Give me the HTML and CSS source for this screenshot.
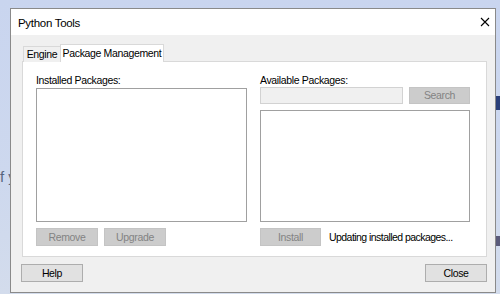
FILE: index.html
```html
<!DOCTYPE html>
<html>
<head>
<meta charset="utf-8">
<link rel="stylesheet" href="styles.css">
</head>
<body>
<div class="desktop">
  <span class="desk-text">f y</span>
  <span class="desk-mark m1"></span>
  <span class="desk-mark m2"></span>
  <div class="window">
    <div class="titlebar">
      <span class="title">Python Tools</span>
      <svg class="close" width="10" height="10" viewBox="0 0 10 10"><path d="M1 1 L9 9 M9 1 L1 9" stroke="#000" stroke-width="1.1" fill="none"/></svg>
    </div>
    <div class="body">
      <div class="tabs">
        <div class="tab">Engine</div>
        <div class="tab active">Package Management</div>
      </div>
      <div class="panel">
        <div class="col left">
          <div class="label">Installed Packages:</div>
          <div class="listbox tall"></div>
          <div class="btnrow">
            <div class="btn disabled">Remove</div>
            <div class="btn disabled">Upgrade</div>
          </div>
        </div>
        <div class="col right">
          <div class="label">Available Packages:</div>
          <div class="searchrow">
            <div class="textbox"></div>
            <div class="btn disabled search">Search</div>
          </div>
          <div class="listbox short"></div>
          <div class="btnrow">
            <div class="btn disabled install">Install</div>
            <span class="status">Updating installed packages...</span>
          </div>
        </div>
      </div>
      <div class="footer">
        <div class="btn normal">Help</div>
        <div class="btn normal">Close</div>
      </div>
    </div>
  </div>
</div>
</body>
</html>
```
FILE: styles.css
```css
* { box-sizing: border-box; }
html, body { margin: 0; padding: 0; }
body {
  width: 500px;
  height: 294px;
  overflow: hidden;
  font-family: "Liberation Sans", Arial, sans-serif;
  font-size: 10.5px;
  letter-spacing: -0.35px;
  color: #000;
}
.desktop {
  position: relative;
  width: 500px;
  height: 294px;
  overflow: hidden;
  background: linear-gradient(180deg, #c9d5ef 0%, #cdd8ee 60%, #d3dcec 100%);
  padding: 8px 0 0 10px;
}
.desk-text {
  position: absolute;
  left: 0;
  top: 168px;
  font-size: 15px;
  letter-spacing: 0;
  color: #55657f;
}
.desk-mark {
  position: absolute;
  left: 496px;
  width: 4px;
  background: #2a3f7a;
}
.m1 { top: 96px; height: 14px; }
.m2 { top: 236px; height: 10px; background: #5a5a7a; }
.window {
  position: relative;
  width: 486px;
  height: 285px;
  border: 1px solid #8a8a8a;
  background: #f0f0f0;
  display: flex;
  flex-direction: column;
}
.titlebar {
  height: 26px;
  background: #fff;
  display: flex;
  align-items: center;
  justify-content: space-between;
  padding: 0 5px 0 7px;
}
.title {
  font-size: 11.5px;
  letter-spacing: -0.3px;
  padding-top: 1px;
}
.close { display: block; margin-top: -1px; }
.body {
  padding: 9px 8px 0 11px;
  display: flex;
  flex-direction: column;
}
.tabs {
  display: flex;
  align-items: flex-end;
  height: 18px;
  padding-left: 1px;
  position: relative;
  z-index: 1;
  margin-bottom: -1px;
}
.tab {
  height: 16px;
  line-height: 14px;
  width: 38px;
  text-align: center;
  border: 1px solid #d9d9d9;
  border-bottom: none;
  background: #f0f0f0;
  color: #000;
}
.tab.active {
  height: 18px;
  width: 104px;
  line-height: 17px;
  background: #fff;
  margin-left: -1px;
}
.panel {
  height: 196px;
  background: #fff;
  border: 1px solid #d9d9d9;
  display: grid;
  grid-template-columns: 211px 210px;
  column-gap: 13px;
  padding: 12px 0 0 13px;
}
.col { display: flex; flex-direction: column; }
.label {
  height: 13px;
  line-height: 13px;
  color: #000;
}
.listbox {
  background: #fff;
  border: 1px solid #a0a0a0;
}
.listbox.tall { height: 134px; margin-top: 1px; }
.listbox.short { height: 112px; margin-top: 6px; }
.searchrow {
  display: flex;
  gap: 6px;
  height: 17px;
}
.textbox {
  width: 143px;
  background: #f0f0f0;
  border: 1px solid #d2d2d2;
}
.btnrow {
  display: flex;
  align-items: center;
  gap: 6px;
  margin-top: 6px;
  height: 18px;
}
.btn {
  width: 62px;
  height: 18px;
  line-height: 16px;
  text-align: center;
  border: 1px solid #adadad;
  background: #e1e1e1;
}
.btn.disabled {
  background: #cccccc;
  border-color: #c4c4c4;
  color: #838383;
}
.btn.search { width: 61px; height: 17px; line-height: 15px; }
.btn.install { width: 61px; }
.status { margin-left: 2px; white-space: nowrap; letter-spacing: -0.55px; }
.footer {
  display: flex;
  justify-content: space-between;
  margin-top: 7px;
  margin-left: -1px;
}
.btn.normal { height: 18px; }
```
